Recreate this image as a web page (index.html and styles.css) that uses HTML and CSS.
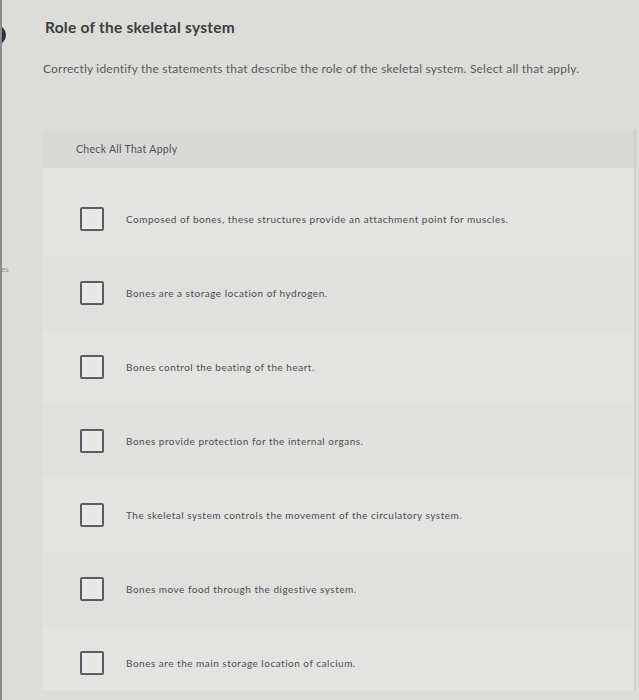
FILE: index.html
```html
<!DOCTYPE html>
<html>
<head>
<meta name="viewport" content="width=device-width, initial-scale=1">
<link rel="stylesheet" href="styles.css">
</head>
<body>

<div class="rail">
  <span class="rail-dot"></span>
  <span class="rail-label">es</span>
</div>

<div class="main">
  <h2 class="title">Role of the skeletal system</h2>
  <p class="prompt">Correctly identify the statements that describe the role of the skeletal system. Select all that apply.</p>

  <div class="panel">
    <div class="panel-head">Check All That Apply</div>
    <label class="choice"><input type="checkbox"><span>Composed of bones, these structures provide an attachment point for muscles.</span></label>
    <label class="choice"><input type="checkbox"><span>Bones are a storage location of hydrogen.</span></label>
    <label class="choice"><input type="checkbox"><span>Bones control the beating of the heart.</span></label>
    <label class="choice"><input type="checkbox"><span>Bones provide protection for the internal organs.</span></label>
    <label class="choice"><input type="checkbox"><span>The skeletal system controls the movement of the circulatory system.</span></label>
    <label class="choice"><input type="checkbox"><span>Bones move food through the digestive system.</span></label>
    <label class="choice"><input type="checkbox"><span>Bones are the main storage location of calcium.</span></label>
  </div>
</div>

</body>
</html>
```

FILE: styles.css
```css
* {
  box-sizing: border-box;
}

body {
  margin: 0;
  height: 700px;
  overflow: hidden;
  display: flex;
  background-color: #dcddd9;
  font-family: Lato, "Liberation Sans", sans-serif;
  color: #4a4b4c;
}

/* Left sidebar, mostly cut off */
.rail {
  width: 9px;
  flex-shrink: 0;
  border-left: 2px solid #8b8c8a;
  overflow: hidden;
  display: flex;
  flex-direction: column;
}

.rail-dot {
  width: 20px;
  height: 20px;
  margin: 25px 0 0 -16px;
  border-radius: 50%;
  background: #2b2d46;
}

.rail-label {
  margin: 219px 0 0 -1px;
  font-size: 8px;
  color: #8a8a8a;
  white-space: nowrap;
}

.main {
  flex: 1;
  padding: 17px 3px 0 36px;
}

.title {
  margin: 0;
  font-size: 15.5px;
  line-height: 20px;
  font-weight: 700;
  letter-spacing: 0.25px;
  color: #3b3c3d;
}

.prompt {
  margin: 24px 0 0 -2px;
  font-size: 12px;
  line-height: 16px;
  letter-spacing: 0.2px;
  color: #595a5b;
}

/* Question box */
.panel {
  margin: 53px 0 0 -3px;
  height: 560px;
  background-color: #e3e3e1;
  border-right: 2px solid #cfd0cd;
}

.panel-head {
  height: 38px;
  padding-left: 34px;
  line-height: 38px;
  font-size: 10.5px;
  letter-spacing: 0.3px;
  color: #4f5052;
  background-color: #d9dad7;
  margin-bottom: 14px;
}

.choice {
  display: flex;
  align-items: center;
  height: 74px;
  padding-left: 38px;
  font-size: 10px;
  letter-spacing: 0.5px;
  color: #4c4d4f;
}

.choice:nth-child(odd) {
  background-color: #e0e1de;
}

.choice input {
  appearance: none;
  width: 24px;
  height: 24px;
  margin: 0 22px 0 0;
  border: 2px solid #5a5e62;
  border-radius: 2px;
  background: #e8e8e6;
}
```
